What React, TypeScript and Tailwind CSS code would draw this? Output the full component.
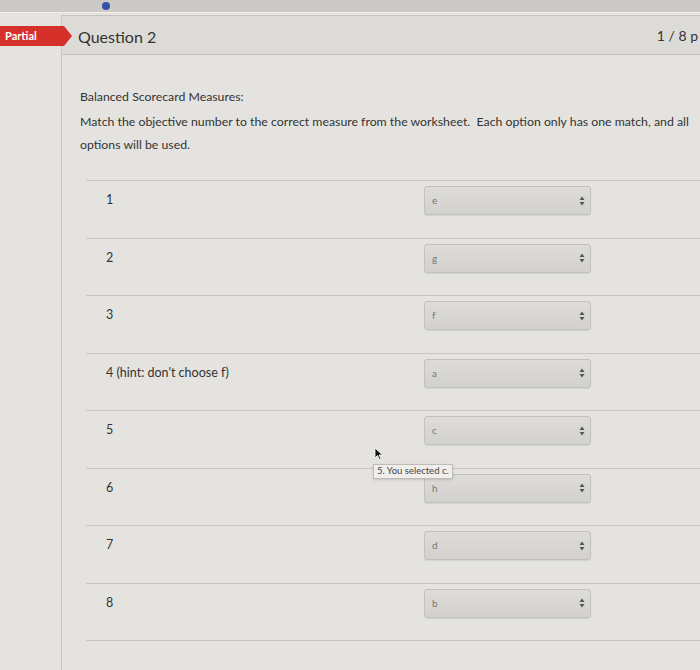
import React from "react";

const rows = [
  { label: "1", value: "e" },
  { label: "2", value: "g" },
  { label: "3", value: "f" },
  { label: "4 (hint: don't choose f)", value: "a" },
  { label: "5", value: "c" },
  { label: "6", value: "h" },
  { label: "7", value: "d" },
  { label: "8", value: "b" },
];

const Arrows = () => (
  <svg width="6" height="10" viewBox="0 0 6 10" className="text-[#555]">
    <path d="M3 0.5 L5.5 4 L0.5 4 Z" fill="currentColor" />
    <path d="M3 9.5 L5.5 6 L0.5 6 Z" fill="currentColor" />
  </svg>
);

const App: React.FC = () => {
  return (
    <div
      className="relative w-[700px] h-[670px] overflow-hidden bg-[#e4e3df] text-[#2d3b45] flex flex-col"
      style={{ fontFamily: "Lato, 'Open Sans', sans-serif" }}
    >
      {/* browser strip */}
      <div className="h-[13px] shrink-0 bg-[#cbcac6] border-b border-[#f0efec] relative">
        <div className="absolute left-[102px] top-[2px] w-[8px] h-[8px] rounded-full bg-[#3a4fa8]" />
      </div>

      <div className="flex flex-1 pt-[2px]">
        <div className="w-[61px] shrink-0" />
        <div className="flex-1 border-l border-[#c9c8c4]">
          {/* header */}
          <div className="h-[40px] bg-[#dcdbd7] border-b border-[#c4c3bf] border-t flex items-center justify-between pl-[16px]">
            <span className="text-[16px] text-[#333] mt-[3px]">Question 2</span>
            <span className="text-[14px] text-[#333] whitespace-nowrap mr-[2px]">1 / 8 p</span>
          </div>

          {/* body */}
          <div className="pl-[18px] pt-[33px] text-[12.3px] text-[#333]">
            <p className="leading-[17px]">Balanced Scorecard Measures:</p>
            <p className="leading-[23px] mt-[5px]">
              Match the objective number to the correct measure from the worksheet.&nbsp; Each option only has one match, and all options will be used.
            </p>

            <div className="mt-[24px] ml-[6px] border-b border-[#c8c7c3] text-[12.5px]">
              {rows.map((r) => (
                <div
                  key={r.label}
                  className="h-[57.5px] border-t border-[#c8c7c3] flex items-start"
                >
                  <div className="w-[338px] pl-[20px] pt-[10px] leading-[17px] shrink-0">
                    {r.label}
                  </div>
                  <div className="mt-[5px] w-[167px] h-[29px] rounded-[3px] border border-[#c2c1bd] bg-gradient-to-b from-[#dddcd8] to-[#d2d1cd] shadow-[0_1px_1px_rgba(0,0,0,0.08)] flex items-center justify-between pl-[7px] pr-[5px]">
                    <span className="text-[10px] text-[#777]">{r.value}</span>
                    <Arrows />
                  </div>
                </div>
              ))}
            </div>
          </div>
        </div>
      </div>

      {/* Partial badge */}
      <div className="absolute left-0 top-[26px] h-[20px] flex items-center">
        <div className="h-[20px] w-[64px] bg-[#d6302b] text-white text-[11px] font-bold flex items-center pl-[5px]">
          Partial
        </div>
        <div className="w-0 h-0 border-t-[10px] border-b-[10px] border-l-[8px] border-t-transparent border-b-transparent border-l-[#d6302b]" />
      </div>

      {/* cursor */}
      <svg className="absolute left-[374px] top-[447px]" width="9" height="13" viewBox="0 0 9 13">
        <path d="M1 1 L1 11 L3.5 8.5 L5.5 12.5 L7 11.8 L5 8 L8.5 8 Z" fill="#111" stroke="#fff" strokeWidth="0.8" />
      </svg>

      {/* tooltip */}
      <div className="absolute left-[373px] top-[464px] px-[3px] h-[15px] flex items-center bg-[#f0efec] border border-[#bdbcb8] text-[9.5px] text-[#444] whitespace-nowrap shadow-sm">
        5. You selected c.
      </div>
    </div>
  );
};

export default App;
